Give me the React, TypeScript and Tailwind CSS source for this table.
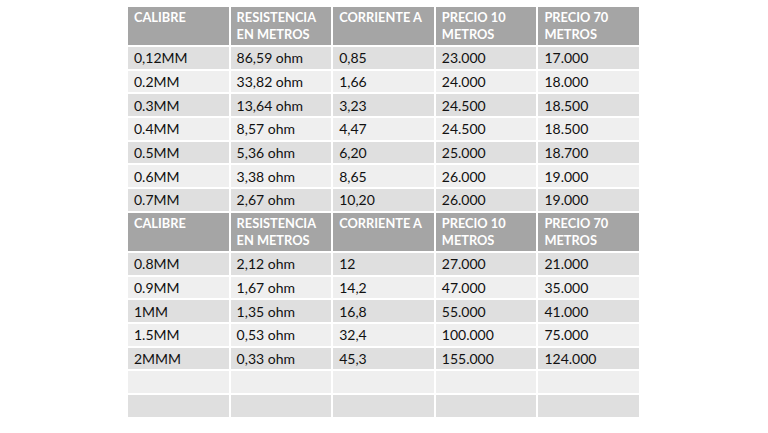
const rowsA = [
  ['0,12MM', '86,59 ohm', '0,85', '23.000', '17.000'],
  ['0.2MM', '33,82 ohm', '1,66', '24.000', '18.000'],
  ['0.3MM', '13,64 ohm', '3,23', '24.500', '18.500'],
  ['0.4MM', '8,57 ohm', '4,47', '24.500', '18.500'],
  ['0.5MM', '5,36 ohm', '6,20', '25.000', '18.700'],
  ['0.6MM', '3,38 ohm', '8,65', '26.000', '19.000'],
  ['0.7MM', '2,67 ohm', '10,20', '26.000', '19.000'],
]

const rowsB = [
  ['0.8MM', '2,12 ohm', '12', '27.000', '21.000'],
  ['0.9MM', '1,67 ohm', '14,2', '47.000', '35.000'],
  ['1MM', '1,35 ohm', '16,8', '55.000', '41.000'],
  ['1.5MM', '0,53 ohm', '32,4', '100.000', '75.000'],
  ['2MMM', '0,33 ohm', '45,3', '155.000', '124.000'],
  ['', '', '', '', ''],
  ['', '', '', '', ''],
]

const headers = [
  ['CALIBRE'],
  ['RESISTENCIA', 'EN METROS'],
  ['CORRIENTE A'],
  ['PRECIO 10', 'METROS'],
  ['PRECIO 70', 'METROS'],
]

function HeaderRow() {
  return (
    <>
      {headers.map((h, i) => (
        <div key={i} className="h-[38px] bg-[#a5a5a5] px-[6px] pt-[2px] text-white font-bold text-[12.8px] leading-[17px] whitespace-nowrap">
          {h.map((line) => (
            <div key={line}>{line}</div>
          ))}
        </div>
      ))}
    </>
  )
}

function DataRows({ rows }: { rows: string[][] }) {
  return (
    <>
      {rows.map((row, r) =>
        row.map((cell, c) => (
          <div
            key={`${r}-${c}`}
            className={`h-[21.7px] flex items-center px-[6px] text-[14px] text-[#111111] ${
              r % 2 === 0 ? 'bg-[#dfdfdf]' : 'bg-[#efefef]'
            }`}
          >
            {cell}
          </div>
        ))
      )}
    </>
  )
}

export default function App() {
  return (
    <div className="w-[768px] h-[433px] bg-white pt-[7px] pl-[128px]" style={{ fontFamily: 'Lato, "Open Sans", sans-serif' }}>
      <div className="w-[511px] grid grid-cols-5 gap-[2px]">
        <HeaderRow />
        <DataRows rows={rowsA} />
        <HeaderRow />
        <DataRows rows={rowsB} />
      </div>
    </div>
  )
}
